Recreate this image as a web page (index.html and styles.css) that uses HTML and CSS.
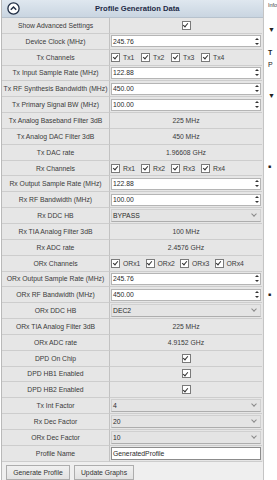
FILE: index.html
```html
<!DOCTYPE html>
<html>
<head>
<meta charset="utf-8">
<link rel="stylesheet" href="styles.css">
</head>
<body>
<div class="app">
  <div class="panel">
    <div class="header">
      <svg class="hicon" width="13" height="13" viewBox="0 0 13 13"><circle cx="6.5" cy="6.5" r="5.6" fill="#fff" stroke="#1f2d44" stroke-width="1.3"/><path d="M3.8 7.8 L6.5 5 L9.2 7.8" fill="none" stroke="#1f2d44" stroke-width="1.4"/></svg>
      <span class="title">Profile Generation Data</span>
    </div>
    <div class="grid">
      <div class="lab">Show Advanced Settings</div><div class="val center"><span class="cb"></span></div>
      <div class="lab">Device Clock (MHz)</div><div class="val"><div class="inp spin">245.76<span class="sp"></span></div></div>
      <div class="lab">Tx Channels</div><div class="val chans tx"><span class="ch"><span class="cb"></span>Tx1</span><span class="ch"><span class="cb"></span>Tx2</span><span class="ch"><span class="cb"></span>Tx3</span><span class="ch"><span class="cb"></span>Tx4</span></div>
      <div class="lab">Tx Input Sample Rate (MHz)</div><div class="val"><div class="inp spin">122.88<span class="sp"></span></div></div>
      <div class="lab">Tx RF Synthesis Bandwidth (MHz)</div><div class="val"><div class="inp spin">450.00<span class="sp"></span></div></div>
      <div class="lab">Tx Primary Signal BW (MHz)</div><div class="val"><div class="inp spin">100.00<span class="sp"></span></div></div>
      <div class="lab">Tx Analog Baseband Filter 3dB</div><div class="val center">225 MHz</div>
      <div class="lab">Tx Analog DAC Filter 3dB</div><div class="val center">450 MHz</div>
      <div class="lab">Tx DAC rate</div><div class="val center">1.96608 GHz</div>
      <div class="lab">Rx Channels</div><div class="val chans tx"><span class="ch"><span class="cb"></span>Rx1</span><span class="ch"><span class="cb"></span>Rx2</span><span class="ch"><span class="cb"></span>Rx3</span><span class="ch"><span class="cb"></span>Rx4</span></div>
      <div class="lab">Rx Output Sample Rate (MHz)</div><div class="val"><div class="inp spin">122.88<span class="sp"></span></div></div>
      <div class="lab">Rx RF Bandwidth (MHz)</div><div class="val"><div class="inp spin">100.00<span class="sp"></span></div></div>
      <div class="lab">Rx DDC HB</div><div class="val"><div class="sel">BYPASS<span class="chev"></span></div></div>
      <div class="lab">Rx TIA Analog Filter 3dB</div><div class="val center">100 MHz</div>
      <div class="lab">Rx ADC rate</div><div class="val center">2.4576 GHz</div>
      <div class="lab">ORx Channels</div><div class="val chans orx"><span class="ch"><span class="cb"></span>ORx1</span><span class="ch"><span class="cb"></span>ORx2</span><span class="ch"><span class="cb"></span>ORx3</span><span class="ch"><span class="cb"></span>ORx4</span></div>
      <div class="lab">ORx Output Sample Rate (MHz)</div><div class="val"><div class="inp spin">245.76<span class="sp"></span></div></div>
      <div class="lab">ORx RF Bandwidth (MHz)</div><div class="val"><div class="inp spin">450.00<span class="sp"></span></div></div>
      <div class="lab">ORx DDC HB</div><div class="val"><div class="sel">DEC2<span class="chev"></span></div></div>
      <div class="lab">ORx TIA Analog Filter 3dB</div><div class="val center">225 MHz</div>
      <div class="lab">ORx ADC rate</div><div class="val center">4.9152 GHz</div>
      <div class="lab">DPD On Chip</div><div class="val center"><span class="cb"></span></div>
      <div class="lab">DPD HB1 Enabled</div><div class="val center"><span class="cb"></span></div>
      <div class="lab">DPD HB2 Enabled</div><div class="val center"><span class="cb"></span></div>
      <div class="lab">Tx Int Factor</div><div class="val"><div class="sel">4<span class="chev"></span></div></div>
      <div class="lab">Rx Dec Factor</div><div class="val"><div class="sel">20<span class="chev"></span></div></div>
      <div class="lab">ORx Dec Factor</div><div class="val"><div class="sel">10<span class="chev"></span></div></div>
      <div class="lab">Profile Name</div><div class="val"><div class="inp name">GeneratedProfile</div></div>
    </div>
    <div class="footer">
      <button class="btn b1">Generate Profile</button>
      <button class="btn b2">Update Graphs</button>
    </div>
  </div>
  <div class="side">
    <div class="info">Info</div>
    <div class="mk m1">▼</div>
    <div class="mk m2">T</div>
    <div class="mk m3">P</div>
    <div class="mk m4">▼</div>
    <div class="mk m5">■</div>
    <div class="mk m6">■</div>
  </div>
</div>
</body>
</html>
```
FILE: styles.css
```css
html, body { margin: 0; padding: 0; background: #fff; }
body { font-family: "Liberation Sans", Arial, sans-serif; font-size: 6.8px; color: #3a3a3a; }
.app { display: flex; width: 277px; height: 480px; overflow: hidden; }
.panel { width: 261px; flex: none; border-left: 1px solid #b9b9b9; border-right: 1px solid #c4c4c4; background: #efefef; display: flex; flex-direction: column; margin-left: 1px; }
.header { height: 18px; display: flex; align-items: center; position: relative; background: linear-gradient(#dfe7ef, #c9d5e1); border-bottom: 1px solid #b7c2cd; box-sizing: border-box; }
.hicon { margin-left: 5px; flex: none; }
.title { font-weight: bold; font-size: 7.6px; color: #1d2a46; margin-left: 75px; }
.grid { display: grid; grid-template-columns: 108px 152px; grid-auto-rows: 15.85px; background: #e4e4e4; }
.lab, .val { border-bottom: 1px solid #cdcdcd; box-sizing: border-box; display: flex; align-items: center; background: #e6e6e6; }
.lab { justify-content: center; border-right: 1px solid #c2c2c2; text-align: center; white-space: nowrap; }
.val { padding: 0 1px; }
.val.center { justify-content: center; }
.cb { display: inline-block; width: 7px; height: 7px; border: 1px solid #7a7a7a; background: #fff; position: relative; flex: none; }
.cb::after { content: ""; position: absolute; left: 1.6px; top: 0.2px; width: 2px; height: 4px; border-right: 1px solid #333; border-bottom: 1px solid #333; transform: rotate(40deg); }
.chans { gap: 0; }
.ch { display: flex; align-items: center; gap: 3px; flex: none; }
.tx .ch { width: 30px; }
.orx .ch { width: 34.5px; }
.inp { flex: 1; height: 12px; background: #fff; border: 1px solid #b5b5b5; box-sizing: border-box; display: flex; align-items: center; padding-left: 1px; position: relative; color: #2a2a2a; }
.inp.name { border-color: #8c8c8c; height: 13px; }
.sp { position: absolute; right: 1px; top: 1px; width: 4px; height: 8px; }
.sp::before, .sp::after { content: ""; position: absolute; left: 0; border-left: 2px solid transparent; border-right: 2px solid transparent; }
.sp::before { top: 0.5px; border-bottom: 2.5px solid #333; }
.sp::after { bottom: 0.5px; border-top: 2.5px solid #333; }
.sel { flex: 1; height: 13px; background: #e4e4e4; border: 1px solid #d0d0d0; border-bottom-color: #adadad; box-sizing: border-box; display: flex; align-items: center; padding-left: 1px; position: relative; color: #2a2a2a; }
.chev { position: absolute; right: 4px; top: 2px; width: 3px; height: 3px; border-right: 1px solid #8a8a8a; border-bottom: 1px solid #8a8a8a; transform: rotate(45deg); }
.footer { flex: 1; display: flex; align-items: flex-start; gap: 4px; padding: 3px 0 0 4px; background: #efefef; }
.btn { font-family: inherit; font-size: 6.8px; color: #333; height: 15px; background: linear-gradient(#f0f0f0, #e2e2e2); border: 1px solid #adadad; padding: 0; border-radius: 0; }
.b1 { width: 64px; }
.b2 { width: 60px; }
.side { flex: 1; background: #fff; padding-left: 4px; display: flex; flex-direction: column; color: #222; }
.info { font-size: 5.5px; margin-top: 2px; color: #444; }
.mk { font-weight: bold; font-size: 7px; line-height: 8px; }
.m1 { margin-top: 18px; }
.m2 { margin-top: 15px; }
.m3 { margin-top: 4px; font-weight: normal; }
.m4 { margin-top: 23px; }
.m5 { margin-top: 62px; font-size: 5px; }
.m6 { margin-top: 120px; font-size: 5px; }
```
